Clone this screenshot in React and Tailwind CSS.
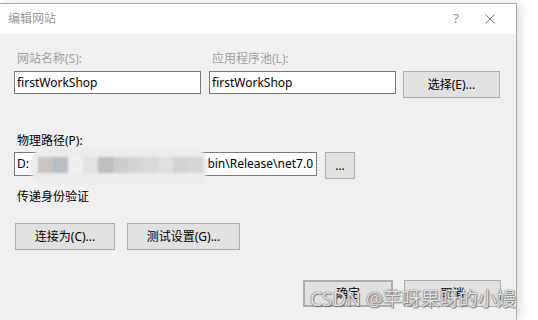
import React from "react";

const font = { fontFamily: '"Noto Sans", "Noto Sans CJK SC", sans-serif' };

function WinButton({ children, className = "" }) {
  return (
    <div
      className={`flex h-[27px] items-center justify-center border border-[#adadad] bg-[#e1e1e1] text-[12px] text-black ${className}`}
    >
      {children}
    </div>
  );
}

function TextBox({ children, className = "" }) {
  return (
    <div
      className={`flex h-[23px] items-center border border-[#7a7a7a] bg-white pl-[2px] text-[12px] text-black ${className}`}
    >
      {children}
    </div>
  );
}

const mosaic = ["#c9c4c1", "#b9bdc3", "#efefef", "#e2e2e2", "#bebebe", "#cdcdcd", "#d4d4d4", "#d9d9d9", "#e0e0e0", "#d3d3d3", "#d6d6d6"];

export default function App() {
  return (
    <div className="relative h-[320px] w-[538px] overflow-hidden bg-white" style={font}>
      <div className="mt-[3px] flex h-[317px] w-[517px] flex-col border-t border-r border-[#a9a9a9] shadow-[4px_0_8px_rgba(0,0,0,0.12)]">
        {/* Title bar */}
        <div className="flex h-[30px] items-center bg-white pl-[8px] text-[12px] text-[#999]">
          <span>编辑网站</span>
          <span className="ml-auto mr-[26px] text-[13px] text-[#888]">?</span>
          <svg width="10" height="10" viewBox="0 0 10 10" className="mr-[21px]">
            <path d="M0.5 0.5 L9.5 9.5 M9.5 0.5 L0.5 9.5" stroke="#777" strokeWidth="1" />
          </svg>
        </div>

        {/* Body */}
        <div className="flex flex-1 flex-col bg-[#f0f0f0] pl-[14px] pt-[17px] text-[12px] leading-[16px]">
          <div className="flex text-[#a0a0a0]">
            <span className="ml-[3px] w-[195px]">网站名称(S):</span>
            <span>应用程序池(L):</span>
          </div>
          <div className="mt-[4px] flex items-start">
            <TextBox className="w-[187px] bg-[#fafafa]">firstWorkShop</TextBox>
            <TextBox className="ml-[8px] w-[187px]">firstWorkShop</TextBox>
            <WinButton className="ml-[7px] w-[97px]">选择(E)...</WinButton>
          </div>

          <div className="mt-[35px] ml-[3px] text-black">物理路径(P):</div>
          <div className="mt-[3px] flex items-start">
            <div className="relative">
              <TextBox className="h-[24px] w-[303px] justify-between pr-[3px]">
                <span>D:</span>
                <span>bin\Release\net7.0</span>
              </TextBox>
              {/* blurred area */}
              <div className="absolute left-[16px] top-[-5px] h-[38px] w-[178px] overflow-hidden rounded-[18px] bg-[#ececec] blur-[1px]">
                <div className="mt-[10px] flex h-[16px] pl-[8px]">
                  {mosaic.map((c, i) => (
                    <div key={i} className="h-full w-[15px]" style={{ backgroundColor: c }} />
                  ))}
                </div>
              </div>
            </div>
            <WinButton className="ml-[8px] w-[30px]">...</WinButton>
          </div>

          <div className="mt-[10px] ml-[3px] text-black">传递身份验证</div>
          <div className="mt-[18px] flex">
            <WinButton className="ml-[1px] w-[100px]">连接为(C)...</WinButton>
            <WinButton className="ml-[12px] w-[113px]">测试设置(G)...</WinButton>
          </div>

          <div className="mt-[30px] flex">
            <WinButton className="ml-[289px] w-[90px] border-2 border-[#0078d7]">确定</WinButton>
            <WinButton className="ml-[11px] w-[97px]">取消</WinButton>
          </div>
        </div>
      </div>

      {/* watermark */}
      <div
        className="absolute left-[310px] top-[287px] text-[19px] leading-[24px] text-white/80"
        style={{ textShadow: "0 0 1px #666, 0 0 1px #666, 1px 1px 1px rgba(0,0,0,0.4)" }}
      >
        CSDN @苹呀果呀的小嫚
      </div>
    </div>
  );
}
